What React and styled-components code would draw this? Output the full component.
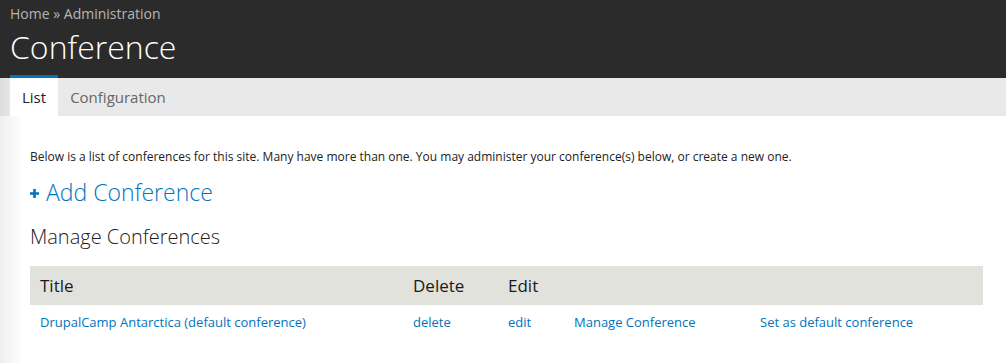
import React from 'react';
import styled, { createGlobalStyle } from 'styled-components';

const GlobalStyle = createGlobalStyle`
  body {
    margin: 0;
    background: #fff;
    font-family: 'Open Sans', 'Noto Sans', sans-serif;
    color: #333;
  }
  a {
    text-decoration: none;
  }
`;

const Header = styled.header`
  background: #2b2b2b;
  height: 78px;
  padding: 4px 10px 0;
  box-sizing: border-box;
`;

const Breadcrumb = styled.div`
  font-size: 14px;
  line-height: 20px;
  color: #b5b5b5;
`;

const Title = styled.h1`
  margin: 4px 0 0;
  font-size: 32px;
  font-weight: 300;
  line-height: 38px;
  color: #fff;
`;

const TabBar = styled.nav`
  display: flex;
  height: 38px;
  padding-left: 10px;
  background: linear-gradient(to right, #dcdcdc, #e9e9e9 12px);
`;

const Tab = styled.a`
  display: flex;
  align-items: center;
  padding: 0 12px;
  font-size: 15px;
  color: ${(p) => (p.$active ? '#222' : '#666')};
  background: ${(p) => (p.$active ? '#fff' : 'transparent')};
  border-top: 3px solid ${(p) => (p.$active ? '#0074bd' : 'transparent')};
  margin-top: -3px;
`;

const Content = styled.main`
  padding: 32px 23px 24px 30px;
  background: linear-gradient(to right, #efefef, #fff 24px);
`;

const Intro = styled.p`
  margin: 0;
  font-size: 12px;
  line-height: 18px;
  color: #222;
`;

const AddLink = styled.a`
  display: flex;
  align-items: center;
  gap: 7px;
  margin-top: 11px;
  font-size: 23px;
  font-weight: 300;
  line-height: 30px;
  color: #0074bd;
`;

const Plus = styled.svg`
  width: 9px;
  height: 9px;
  margin-top: 2px;
`;

const SectionTitle = styled.h2`
  margin: 17px 0 0;
  font-size: 20px;
  font-weight: 300;
  line-height: 26px;
  color: #222;
`;

const Table = styled.table`
  width: 100%;
  margin-top: 16px;
  border-collapse: collapse;
  table-layout: fixed;
`;

const Th = styled.th`
  height: 39px;
  padding: 0 10px;
  background: #e1e2dc;
  font-size: 17px;
  font-weight: 400;
  text-align: left;
  color: #1a1a1a;
`;

const Td = styled.td`
  height: 34px;
  padding: 0 10px;
  font-size: 13px;
`;

const RowLink = styled.a`
  color: #0074bd;
`;

const columns = [
  { label: 'Title', width: 373 },
  { label: 'Delete', width: 95 },
  { label: 'Edit', width: 66 },
  { label: '', width: 186 },
  { label: '', width: 233 },
];

const rows = [
  [
    'DrupalCamp Antarctica (default conference)',
    'delete',
    'edit',
    'Manage Conference',
    'Set as default conference',
  ],
];

export default function App() {
  return (
    <>
      <GlobalStyle />
      <Header>
        <Breadcrumb>Home » Administration</Breadcrumb>
        <Title>Conference</Title>
      </Header>
      <TabBar>
        <Tab href="#" $active>List</Tab>
        <Tab href="#">Configuration</Tab>
      </TabBar>
      <Content>
        <Intro>
          Below is a list of conferences for this site. Many have more than one. You may administer your conference(s) below, or create a new one.
        </Intro>
        <AddLink href="#">
          <Plus viewBox="0 0 9 9">
            <path d="M3.2 0h2.6v3.2H9v2.6H5.8V9H3.2V5.8H0V3.2h3.2z" fill="#0074bd" />
          </Plus>
          Add Conference
        </AddLink>
        <SectionTitle>Manage Conferences</SectionTitle>
        <Table>
          <colgroup>
            {columns.map((c, i) => (
              <col key={i} style={{ width: c.width }} />
            ))}
          </colgroup>
          <thead>
            <tr>
              {columns.map((c, i) => (
                <Th key={i}>{c.label}</Th>
              ))}
            </tr>
          </thead>
          <tbody>
            {rows.map((r, i) => (
              <tr key={i}>
                {r.map((cell, j) => (
                  <Td key={j}>
                    <RowLink href="#">{cell}</RowLink>
                  </Td>
                ))}
              </tr>
            ))}
          </tbody>
        </Table>
      </Content>
    </>
  );
}
